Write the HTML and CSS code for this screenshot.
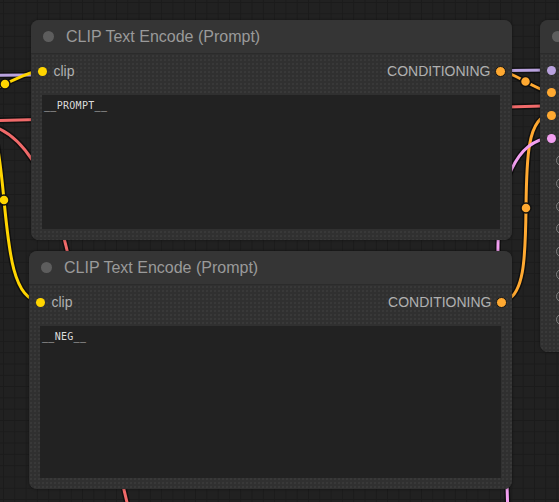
FILE: index.html
```html
<!DOCTYPE html>
<html>
<head>
<meta charset="utf-8">
<link rel="stylesheet" href="styles.css">
</head>
<body>
<div class="canvas">
  <svg class="links" width="559" height="502" viewBox="0 0 559 502">
    <g class="outline">
      <path d="M -20 75.5 L 551 70"/>
      <path d="M -20 121 L 600 104.5"/>
      <path d="M -20 124 C 22 126, 50.5 180, 66 246 L 130 515"/>
      <path d="M -32 97 C -12 97, 22 71, 42 71"/>
      <path d="M -32 99 C 21 99, -13 301, 40 301"/>
      <path d="M 500 71 C 513 71, 538 92, 551 92"/>
      <path d="M 501 301 C 549 301, 503 115, 551 115"/>
      <path d="M 551 138 C 515 140, 499 185, 498 245 C 497 320, 506 420, 508 520"/>
    </g>
    <g class="wire">
      <path class="w-purple" d="M -20 75.5 L 551 70"/>
      <path class="w-red" d="M -20 121 L 600 104.5"/>
      <path class="w-red" d="M -20 124 C 22 126, 50.5 180, 66 246 L 130 515"/>
      <path class="w-yellow" d="M -32 97 C -12 97, 22 71, 42 71"/>
      <path class="w-yellow" d="M -32 99 C 21 99, -13 301, 40 301"/>
      <path class="w-orange" d="M 500 71 C 513 71, 538 92, 551 92"/>
      <path class="w-orange" d="M 501 301 C 549 301, 503 115, 551 115"/>
      <path class="w-pink" d="M 551 138 C 515 140, 499 185, 498 245 C 497 320, 506 420, 508 520"/>
    </g>
    <g class="mid">
      <circle class="m-yellow" cx="5" cy="84" r="5"/>
      <circle class="m-yellow" cx="4" cy="200" r="5"/>
      <circle class="m-orange" cx="525.5" cy="81.5" r="5"/>
      <circle class="m-orange" cx="526" cy="208" r="5"/>
    </g>
  </svg>

  <div class="node n1">
    <div class="title"><span class="tdot"></span><span class="ttext">CLIP Text Encode (Prompt)</span></div>
    <div class="body">
      <div class="slots">
        <div class="in"><span class="dot d-yellow"></span><span class="label">clip</span></div>
        <div class="out"><span class="label">CONDITIONING</span><span class="dot d-orange linked"></span></div>
      </div>
      <div class="ta">__PROMPT__</div>
    </div>
  </div>

  <div class="node n2">
    <div class="title"><span class="tdot"></span><span class="ttext">CLIP Text Encode (Prompt)</span></div>
    <div class="body">
      <div class="slots">
        <div class="in"><span class="dot d-yellow"></span><span class="label">clip</span></div>
        <div class="out"><span class="label">CONDITIONING</span><span class="dot d-orange linked"></span></div>
      </div>
      <div class="ta">__NEG__</div>
    </div>
  </div>

  <div class="node n3">
    <div class="title"><span class="tdot"></span></div>
    <div class="body3">
      <div class="row"><span class="dot d-purple"></span></div>
      <div class="row"><span class="dot d-orange"></span></div>
      <div class="row"><span class="dot d-orange"></span></div>
      <div class="row"><span class="dot d-pink"></span></div>
      <div class="row"><span class="ring"></span></div>
      <div class="row"><span class="ring"></span></div>
      <div class="row"><span class="ring"></span></div>
      <div class="row"><span class="ring"></span></div>
      <div class="row"><span class="ring"></span></div>
      <div class="row"><span class="ring"></span></div>
      <div class="row"><span class="ring"></span></div>
      <div class="row"><span class="ring"></span></div>
    </div>
  </div>
</div>
</body>
</html>
```

FILE: styles.css
```css
html, body {
  margin: 0;
  padding: 0;
  background: #202020;
}

.canvas {
  position: relative;
  width: 559px;
  height: 502px;
  overflow: hidden;
  background-color: #212121;
  background-image:
    linear-gradient(to right, #1b1b1b 1px, transparent 1px),
    linear-gradient(to bottom, #1b1b1b 1px, transparent 1px);
  background-size: 11.3px 11.3px;
  background-position: 3px 2px;
  font-family: "Liberation Sans", Arial, sans-serif;
}

.links {
  position: absolute;
  left: 0;
  top: 0;
  overflow: visible;
}

.links path {
  fill: none;
  stroke-linecap: round;
}

.outline path {
  stroke: #0d0d0d;
  stroke-width: 6;
  opacity: 0.85;
}

.wire path {
  stroke-width: 3;
}

.w-purple { stroke: #b9a2de; }
.w-red { stroke: #f06a6a; }
.w-yellow { stroke: #ffd500; }
.w-orange { stroke: #ffa931; }
.w-pink { stroke: #f29ff0; }

.mid circle {
  stroke: #111;
  stroke-width: 1.5;
}
.m-yellow { fill: #ffd500; }
.m-orange { fill: #ffa931; }

.node {
  position: absolute;
  display: flex;
  flex-direction: column;
  border-radius: 8px;
  overflow: hidden;
  background: #303030;
  box-shadow: 0 0 3px rgba(0, 0, 0, 0.45);
}

.n1 { left: 31px; top: 20px; width: 481px; height: 220px; }
.n2 { left: 29px; top: 251px; width: 483px; height: 238px; }
.n3 { left: 540px; top: 20px; width: 60px; height: 332px; }

.title {
  flex: none;
  box-sizing: border-box;
  height: 34px;
  display: flex;
  align-items: center;
  gap: 12px;
  padding-left: 12px;
  background: #353535;
  border-bottom: 1px solid #2b2b2b;
}

.tdot {
  width: 11px;
  height: 11px;
  border-radius: 50%;
  background: #5d5d5d;
  flex: none;
}

.ttext {
  font-size: 16px;
  color: #9a9a9a;
  white-space: nowrap;
}

.body, .body3 {
  flex: 1;
  display: flex;
  flex-direction: column;
  background-color: #303030;
  background-image: radial-gradient(rgba(255, 255, 255, 0.045) 0.7px, transparent 1px);
  background-size: 4px 4px;
}

.body {
  padding: 0 12px 11px 11px;
}
.n2 .body { padding-right: 11px; }

.slots {
  flex: none;
  height: 34px;
  margin: 0 -4.5px;
  display: flex;
  align-items: center;
  justify-content: space-between;
}

.in, .out {
  display: flex;
  align-items: center;
}
.in { gap: 7px; }
.out { gap: 5px; }

.label {
  font-size: 14px;
  color: #b0b0b0;
  white-space: nowrap;
}

.dot {
  flex: none;
  width: 9px;
  height: 9px;
  border-radius: 50%;
  box-sizing: border-box;
}
.dot.linked {
  border: 1.5px solid #161616;
  width: 11px;
  height: 11px;
  margin: -1px;
}

.d-yellow { background: #ffd500; }
.d-orange { background: #ffa931; }
.d-purple { background: #b9a2de; }
.d-pink { background: #f29ff0; }

.ta {
  flex: 1;
  margin-top: 7px;
  background: #222222;
  padding: 4px 2px;
  font-family: "DejaVu Sans Mono", monospace;
  font-size: 10px;
  line-height: 13px;
  letter-spacing: 0.3px;
  color: #dcdcdc;
}

.body3 {
  padding-top: 4.7px;
}

.row {
  flex: none;
  height: 22.7px;
  display: flex;
  align-items: center;
}

.row .dot {
  margin-left: 6.5px;
}

.ring {
  flex: none;
  margin-left: 16px;
  width: 11px;
  height: 11px;
  box-sizing: border-box;
  border: 1.5px solid #7c7c7c;
  border-radius: 50%;
}
```
